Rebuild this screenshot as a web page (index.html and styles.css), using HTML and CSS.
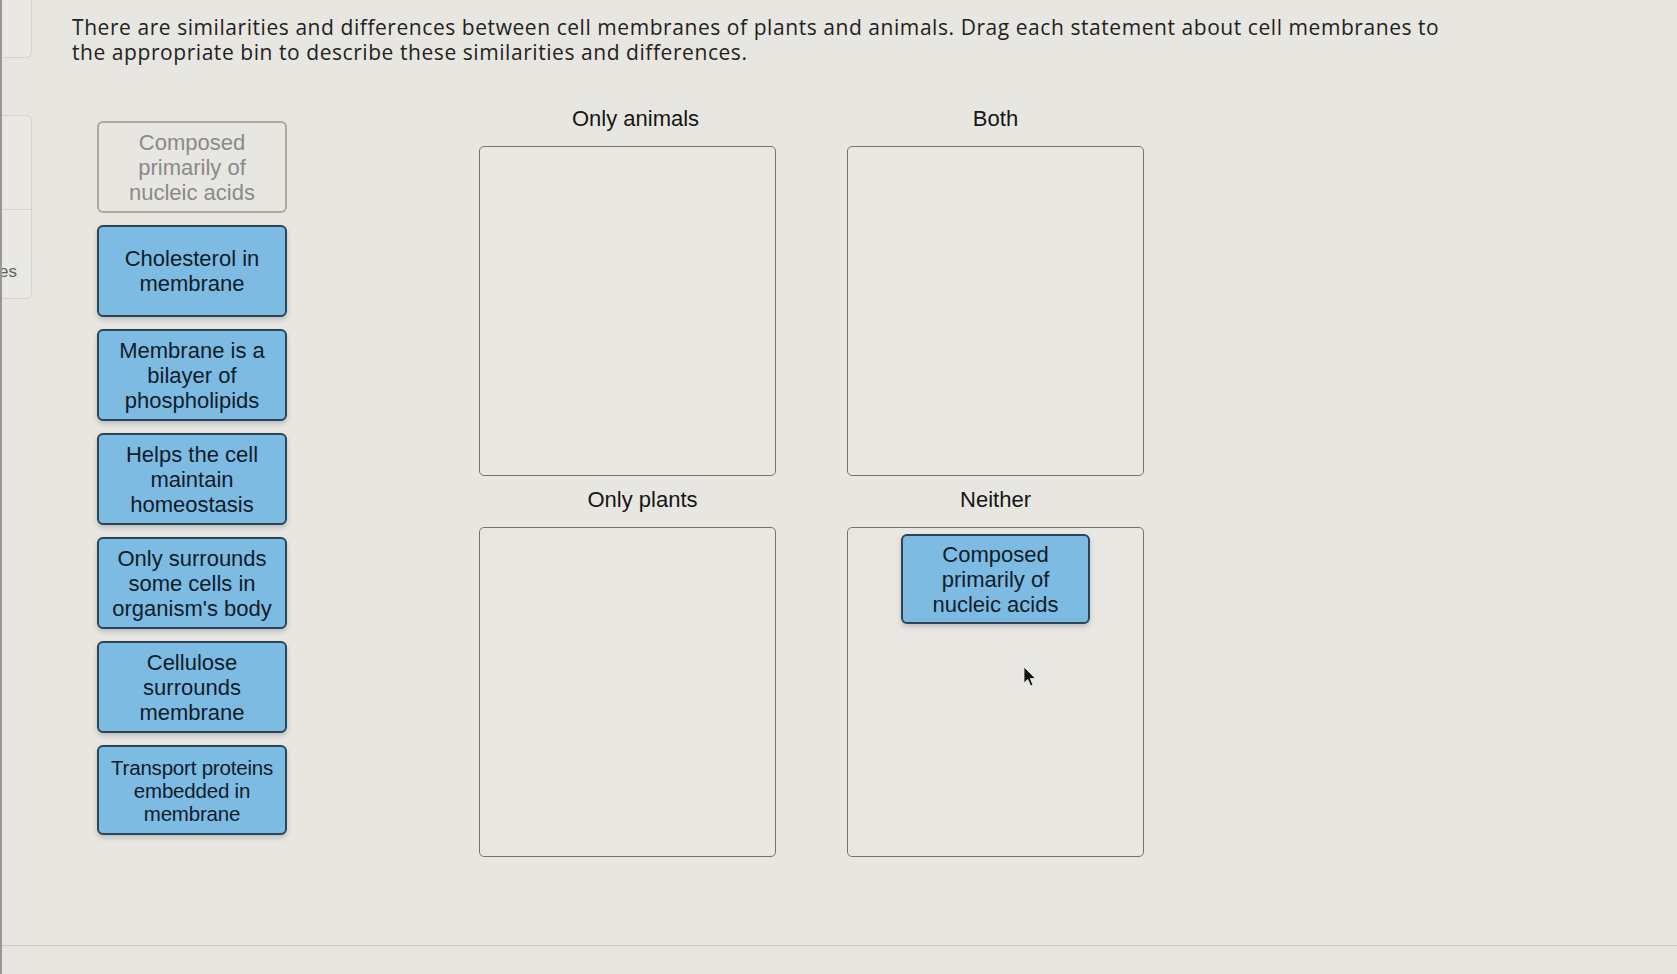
FILE: index.html
```html
<!DOCTYPE html>
<html lang="en">
<head>
<meta charset="utf-8">
<title>Cell membranes sorting</title>
<link rel="stylesheet" href="styles.css">
</head>
<body>
<div class="screen">
  <aside class="sidebar">
    <div class="stub stub-top"></div>
    <div class="stub stub-list">
      <div class="stub-row"></div>
      <div class="stub-row stub-row-last"><span class="stub-text">es</span></div>
    </div>
  </aside>
  <main class="main">
    <p class="prompt">There are similarities and differences between cell membranes of plants and animals. Drag each statement about cell membranes to the appropriate bin to describe these similarities and differences.</p>
    <div class="workspace">
      <div class="cards">
        <div class="card card-placeholder">Composed primarily of nucleic acids</div>
        <div class="card">Cholesterol in membrane</div>
        <div class="card">Membrane is a bilayer of phospholipids</div>
        <div class="card">Helps the cell maintain homeostasis</div>
        <div class="card">Only surrounds some cells in organism's body</div>
        <div class="card">Cellulose surrounds membrane</div>
        <div class="card card-tight">Transport proteins embedded in membrane</div>
      </div>
      <div class="bins">
        <section class="bin">
          <h3 class="bin-label bin-label-a">Only animals</h3>
          <div class="bin-box"></div>
        </section>
        <section class="bin">
          <h3 class="bin-label">Both</h3>
          <div class="bin-box"></div>
        </section>
        <section class="bin">
          <h3 class="bin-label bin-label-p">Only plants</h3>
          <div class="bin-box"></div>
        </section>
        <section class="bin">
          <h3 class="bin-label">Neither</h3>
          <div class="bin-box">
            <div class="card card-dropped">Composed primarily of nucleic acids</div>
          </div>
        </section>
      </div>
    </div>
  </main>
  <svg class="cursor" width="14" height="22" viewBox="0 0 14 22" aria-hidden="true">
    <path d="M1 1 L1 17 L4.8 13.4 L7.6 20 L10 19 L7.3 12.6 L12.4 12.4 Z" fill="#111" stroke="#f2f2f2" stroke-width="0.8" stroke-linejoin="round"/>
  </svg>
</div>
<footer class="footer"></footer>
</body>
</html>
```

FILE: styles.css
```css
html, body {
  margin: 0;
  padding: 0;
}

body {
  background: #e8e6e0;
  width: 1677px;
  height: 974px;
  overflow: hidden;
  box-sizing: border-box;
  border-left: 2px solid #9a9894;
  font-family: "Liberation Sans", Arial, sans-serif;
}

.screen {
  position: relative;
  display: flex;
  height: 945px;
}

.sidebar {
  width: 30px;
  flex: none;
  display: flex;
  flex-direction: column;
}

.stub {
  border: 1px solid #d4d2cc;
  border-left: none;
  background: #eae8e3;
}

.stub-top {
  height: 57px;
  border-top: none;
  border-bottom-right-radius: 6px;
}

.stub-list {
  margin-top: 57px;
  height: 184px;
  box-sizing: border-box;
  border-radius: 0 6px 6px 0;
  display: flex;
  flex-direction: column;
}

.stub-row {
  height: 93px;
  flex: none;
}

.stub-row + .stub-row {
  border-top: 1px solid #d4d2cc;
}

.stub-row-last {
  flex: 1;
  height: auto;
  padding-top: 53px;
  box-sizing: border-box;
}

.stub-text {
  display: block;
  font-family: "Liberation Sans", Arial, sans-serif;
  font-size: 17px;
  line-height: 18px;
  color: #5f5f5f;
  margin-left: -3px;
}

.main {
  flex: 1;
  padding-left: 40px;
  padding-top: 15px;
}

.prompt {
  margin: 0;
  width: 1385px;
  font-family: "Open Sans", "Lato", sans-serif;
  font-size: 21px;
  letter-spacing: 0.56px;
  line-height: 25px;
  color: #222222;
}

.workspace {
  display: flex;
  margin-top: 41px;
}

.cards {
  margin-left: 25px;
  padding-top: 15px;
  width: 190px;
  display: flex;
  flex-direction: column;
  gap: 12px;
}

.card {
  height: 92px;
  box-sizing: border-box;
  border: 2px solid #2b4658;
  border-radius: 6px;
  background: #7dbbe3;
  color: #0e1d29;
  font-family: "Liberation Sans", Arial, sans-serif;
  font-size: 22px;
  line-height: 25px;
  text-align: center;
  display: flex;
  align-items: center;
  justify-content: center;
  padding: 0 6px;
  box-shadow: 0 3px 5px rgba(60, 60, 60, 0.22);
}

.card-tight {
  font-size: 20.5px;
  line-height: 23px;
  letter-spacing: -0.2px;
  height: 90px;
  padding: 0 2px;
}

.card-placeholder {
  background: #e8e6e1;
  border: 2px solid #aba8a2;
  color: #8a8a8a;
  box-shadow: none;
}

.bins {
  margin-left: 192px;
  display: grid;
  grid-template-columns: 297px 297px;
  column-gap: 71px;
  row-gap: 11px;
}

.bin {
  display: flex;
  flex-direction: column;
}

.bin-label {
  margin: 0 0 14px;
  font-family: "Liberation Sans", Arial, sans-serif;
  font-weight: normal;
  font-size: 22px;
  line-height: 26px;
  color: #161616;
  text-align: center;
}

.bin-label-a {
  padding-left: 16px;
}

.bin-label-p {
  padding-left: 30px;
}

.bin-box {
  height: 330px;
  box-sizing: border-box;
  border: 1.5px solid #75726e;
  border-radius: 5px;
  background: #e9e7e2;
  display: flex;
  flex-direction: column;
  align-items: center;
  padding-top: 6px;
}

.card-dropped {
  width: 189px;
  height: 90px;
}

.cursor {
  position: absolute;
  left: 1021px;
  top: 666px;
}

.footer {
  height: 29px;
  border-top: 1px solid #cac8c2;
  background: #e7e5df;
}
```
